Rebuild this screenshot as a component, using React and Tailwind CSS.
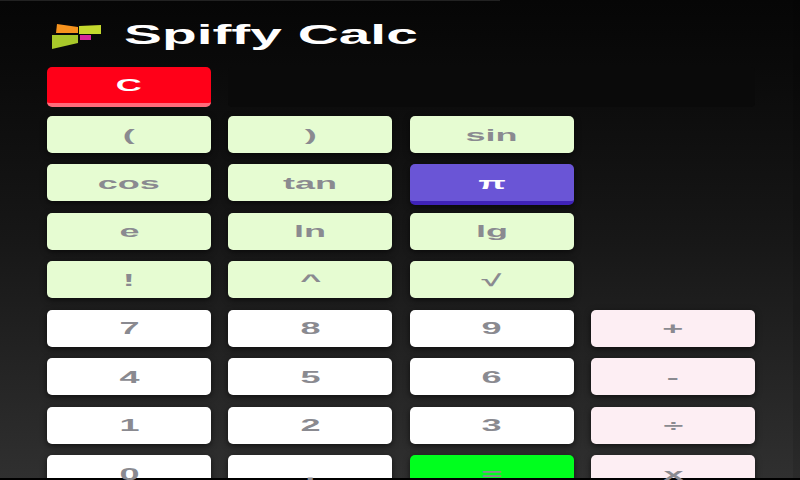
const rows = [
  [
    { label: "(", kind: "fn" },
    { label: ")", kind: "fn" },
    { label: "sin", kind: "fn" },
    null,
  ],
  [
    { label: "cos", kind: "fn" },
    { label: "tan", kind: "fn" },
    { label: "π", kind: "pi" },
    null,
  ],
  [
    { label: "e", kind: "fn" },
    { label: "ln", kind: "fn" },
    { label: "lg", kind: "fn" },
    null,
  ],
  [
    { label: "!", kind: "fn" },
    { label: "^", kind: "fn" },
    { label: "√", kind: "fn" },
    null,
  ],
  [
    { label: "7", kind: "num" },
    { label: "8", kind: "num" },
    { label: "9", kind: "num" },
    { label: "+", kind: "op" },
  ],
  [
    { label: "4", kind: "num" },
    { label: "5", kind: "num" },
    { label: "6", kind: "num" },
    { label: "-", kind: "op" },
  ],
  [
    { label: "1", kind: "num" },
    { label: "2", kind: "num" },
    { label: "3", kind: "num" },
    { label: "÷", kind: "op" },
  ],
  [
    { label: "0", kind: "num" },
    { label: ".", kind: "num" },
    { label: "=", kind: "eq" },
    { label: "x", kind: "op" },
  ],
];

const kinds = {
  fn: "bg-[#e6fcd2] text-[#8a8a90] h-[37px]",
  num: "bg-white text-[#8a8a90] h-[37px]",
  op: "bg-[#fdeef3] text-[#8a8a90] h-[37px]",
  eq: "bg-[#00ff1e] text-[#8a8a90] h-[37px]",
  pi: "bg-[#6a55d6] text-white h-[41px] border-b-[4px] border-[#3f22b8] -mb-[4px]",
};

function Key({ label, kind }) {
  return (
    <button className={`flex items-center justify-center rounded-[5px] shadow-[0_2px_6px_rgba(0,0,0,0.6)] ${kinds[kind]}`}>
      <span className="inline-block translate-y-px scale-x-[2.25] text-[16px] font-bold leading-none">{label}</span>
    </button>
  );
}

function Logo() {
  return (
    <svg width="50" height="26" viewBox="0 0 50 26" className="shrink-0">
      <polygon points="6,0 27,3 27,9 5,9" fill="#f7931e" />
      <polygon points="28,2 50,1 50,10 28,10" fill="#c4d92e" />
      <polygon points="1,11 27,11 27,19 1,25" fill="#a8c82a" />
      <rect x="29" y="11" width="11" height="5" fill="#d5279b" />
    </svg>
  );
}

export default function App() {
  return (
    <div className="relative h-[480px] w-[800px] overflow-hidden bg-gradient-to-b from-[#060606] via-[#171717] to-[#303030] font-['Liberation_Sans',sans-serif]">
      {/* thin line at the top edge, page end at the bottom, scrollbar track */}
      <div className="absolute left-0 top-0 h-px w-[500px] bg-[#222222]" />
      <div className="absolute bottom-0 left-0 h-[2px] w-full bg-black" />
      <div className="absolute right-0 top-0 h-full w-[7px] bg-black/10" />

      <div className="flex h-[67px] items-start pl-[51px] pt-[24px]">
        <Logo />
        <h1 className="ml-[23px] -mt-[3px] inline-block origin-left scale-x-[2.03] text-[28px] font-bold leading-none text-white">
          Spiffy Calc
        </h1>
      </div>
      <div className="ml-[47px] flex w-[708px] flex-col gap-y-[11.45px]">
        <div className="-mb-[2.45px] grid grid-cols-[164px_1fr] gap-x-[17px]">
          <button className="flex h-[40px] items-center justify-center rounded-[5px] border-b-[4px] border-[#ff6b7a] bg-[#ff0018] text-white">
            <span className="inline-block translate-y-px scale-x-[2.25] text-[16px] font-bold leading-none">C</span>
          </button>
          <div className="h-[40px] rounded-[4px] bg-[#0a0a0a]" />
        </div>
        {rows.map((row, i) => (
          <div key={i} className="grid grid-cols-4 gap-x-[17.3px]">
            {row.map((k, j) => (k ? <Key key={j} {...k} /> : <div key={j} />))}
          </div>
        ))}
      </div>
    </div>
  );
}
